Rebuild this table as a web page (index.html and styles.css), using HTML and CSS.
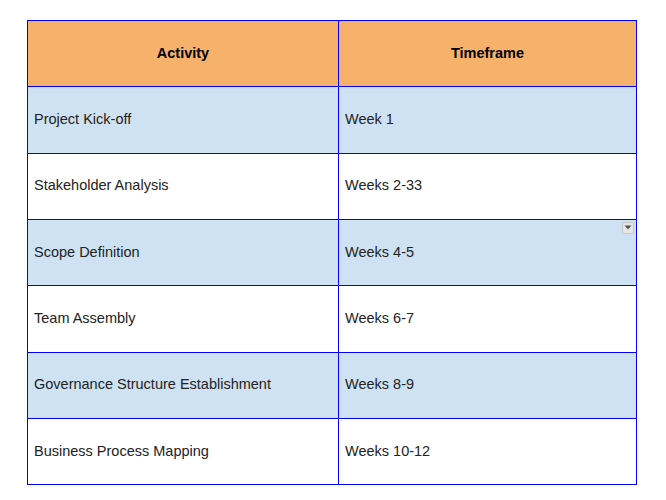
FILE: index.html
```html
<!DOCTYPE html>
<html>
<head>
<meta charset="utf-8">
<link rel="stylesheet" href="styles.css">
</head>
<body>
<table class="plan">
  <colgroup><col class="c1"><col class="c2"></colgroup>
  <thead>
    <tr class="head"><th>Activity</th><th>Timeframe</th></tr>
  </thead>
  <tbody>
    <tr class="blue"><td>Project Kick-off</td><td>Week 1</td></tr>
    <tr class="white"><td>Stakeholder Analysis</td><td>Weeks 2-33</td></tr>
    <tr class="blue"><td>Scope Definition</td><td class="has-drop">Weeks 4-5<span class="drop"><svg width="8" height="5" viewBox="0 0 8 5"><path d="M0.5 0.5h7L4 4.5z" fill="#555"/></svg></span></td></tr>
    <tr class="white"><td>Team Assembly</td><td>Weeks 6-7</td></tr>
    <tr class="blue"><td>Governance Structure Establishment</td><td>Weeks 8-9</td></tr>
    <tr class="white"><td>Business Process Mapping</td><td>Weeks 10-12</td></tr>
  </tbody>
</table>
</body>
</html>
```
FILE: styles.css
```css
html, body {
  margin: 0;
  padding: 0;
  background: #ffffff;
}
body {
  padding: 20px 0 0 27px;
  font-family: Arial, "Liberation Sans", sans-serif;
  font-size: 14.5px;
  color: #222222;
}
.plan {
  border-collapse: collapse;
  width: 609px;
  table-layout: fixed;
}
.c1 { width: 311px; }
.c2 { width: 298px; }
.plan th, .plan td {
  border: 1px solid #0000ff;
  height: 66.33px;
  padding: 0 6px 2px;
  vertical-align: middle;
  box-sizing: border-box;
}
.plan th {
  font-weight: bold;
  color: #000000;
  text-align: center;
}
.plan td {
  text-align: left;
}
.head { background: #f6b26b; }
.blue { background: #cfe2f3; }
.white { background: #ffffff; }
.has-drop { position: relative; }
.drop {
  position: absolute;
  top: 2px;
  right: 2px;
  width: 12px;
  height: 12px;
  box-sizing: border-box;
  background: #e6e6e6;
  border: 1px solid #c8c8c8;
  border-radius: 1px;
  display: flex;
  align-items: center;
  justify-content: center;
}
.drop svg { display: block; }
```
